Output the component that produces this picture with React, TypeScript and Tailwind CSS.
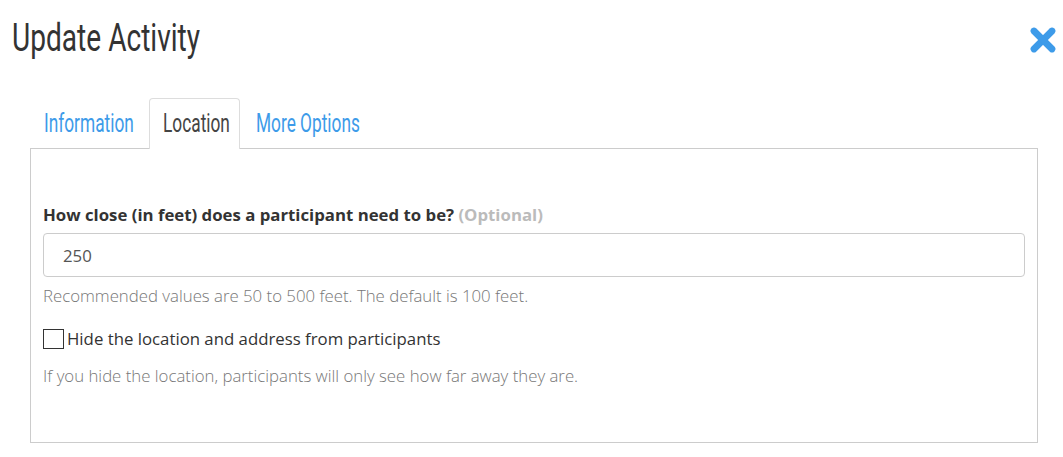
import { X } from "lucide-react";

const heading = "font-['Roboto',sans-serif]";
const body = "font-['Open_Sans',sans-serif]";

const tabs = [
  { name: "Information", width: "w-[117px]" },
  { name: "Location", width: "w-[91px]" },
  { name: "More Options", width: "w-[131px]" },
];

const App = () => {
  const active = "Location";

  return (
    <div className={`min-h-screen bg-white ${body}`}>
      <div className="flex items-start justify-between pl-3 pr-[2px] pt-[15px]">
        <h1 className={`${heading} inline-block origin-left scale-x-[0.72] whitespace-nowrap text-[39px] leading-[46px] text-[#333]`}>
          Update Activity
        </h1>
        <button className="mt-[7px] text-[#3d9be9]">
          <X size={36} strokeWidth={4.5} />
        </button>
      </div>

      <div className="mt-[37px] pl-[30px] pr-[25px]">
        <div className="flex">
          {tabs.map((tab) => (
            <div
              key={tab.name}
              className={`${heading} ${tab.width} mr-[2px] overflow-visible whitespace-nowrap px-[13px] pb-[9px] pt-[10px] text-[26px] leading-[29px] ${
                tab.name === active
                  ? "relative -mb-px rounded-t-[4px] border border-b-0 border-[#ddd] bg-white text-[#444]"
                  : "border border-transparent text-[#3d9be9]"
              }`}
            >
              <span className="inline-block origin-left scale-x-[0.665]">{tab.name}</span>
            </div>
          ))}
        </div>

        <div className="border border-[#ccc] px-[12px] pb-[55px] pt-[55px]">
          <label className="block text-[16.8px] font-bold leading-[22px] text-[#333]">
            How close (in feet) does a participant need to be?{" "}
            <span className="text-[#bbb]">(Optional)</span>
          </label>
          <input
            defaultValue="250"
            className="mt-[7px] block h-[44px] w-full rounded-[4px] border border-[#ccc] px-[19px] text-[16.8px] text-[#555] outline-none"
          />
          <p className="mt-[8px] text-[16.8px] font-light leading-[22px] text-[#777]">
            Recommended values are 50 to 500 feet. The default is 100 feet.
          </p>

          <label className="mt-[21px] flex items-center text-[16.8px] leading-[22px] text-[#333]">
            <span className="mr-[3px] inline-block h-[20px] w-[21px] border border-[#333] bg-white" />
            Hide the location and address from participants
          </label>
          <p className="mt-[15px] text-[16.8px] font-light leading-[22px] text-[#777]">
            If you hide the location, participants will only see how far away they are.
          </p>
        </div>
      </div>
    </div>
  );
};

export default App;
